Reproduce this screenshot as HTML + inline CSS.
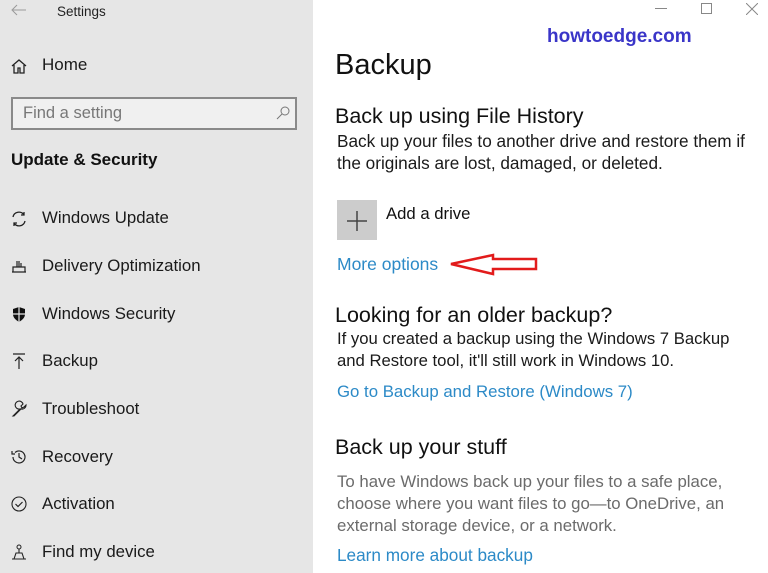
<!DOCTYPE html>
<html><head><meta charset="utf-8"><style>
*{margin:0;padding:0;box-sizing:border-box}
body{width:768px;height:573px;overflow:hidden;background:#fff;font-family:"Liberation Sans",sans-serif;position:relative;color:#000}
.side{position:absolute;left:0;top:0;width:313px;height:573px;background:#e6e6e6}
.a{position:absolute;white-space:nowrap}
.nav{font-size:16.8px;color:#1a1a1a}
.ic{position:absolute;left:10px;width:18px;height:18px}
.p{font-size:16.7px;color:#1a1a1a}
.g{color:#6b6b6b}
.l{color:#2c8ac7;font-size:16.5px}
</style></head><body>
<div class="side">
<svg class="a" style="left:11px;top:4px" width="16" height="12" viewBox="0 0 16 12"><path d="M15 6H2M6 1L1 6l5 5" stroke="#999" fill="none" stroke-width="1"/></svg>
<div class="a" style="left:57px;top:4px;font-size:13.5px;color:#222">Settings</div>
<svg class="ic" style="top:57px" viewBox="0 0 18 18"><path d="M2 9L9 3l7 6M4 8v8h4v-5h2v5h4V8" stroke="#222" fill="none" stroke-width="1.3"/></svg>
<div class="a nav" style="left:42px;top:55px;font-size:17px">Home</div>
<div class="a" style="left:11px;top:97px;width:286px;height:33px;border:2px solid #8a8a8a;background:#f0f0f0"></div>
<div class="a" style="left:23px;top:104px;font-size:16.5px;color:#777">Find a setting</div>
<svg class="a" style="left:275px;top:105px" width="16" height="16" viewBox="0 0 16 16"><circle cx="10" cy="6" r="4" stroke="#777" fill="none"/><path d="M7 9L2 14" stroke="#777"/></svg>
<div class="a" style="left:11px;top:150px;font-size:17px;font-weight:bold;color:#111">Update &amp; Security</div>
<svg class="ic" style="top:210px" viewBox="0 0 18 18"><path d="M3 7a6 6 0 0 1 11-2M15 11a6 6 0 0 1-11 2M14 2v3h-3M4 16v-3h3" stroke="#222" fill="none" stroke-width="1.3"/></svg>
<div class="a nav" style="left:42px;top:208px">Windows Update</div>
<svg class="ic" style="top:257px" viewBox="0 0 18 18"><path d="M2 15h14M3 15v-5h12v5M7 10V4M9 4v6M11 6v4" stroke="#222" fill="none" stroke-width="1.2"/></svg>
<div class="a nav" style="left:42px;top:256px">Delivery Optimization</div>
<svg class="ic" style="top:305px" viewBox="0 0 18 18"><path d="M9 2l6 2v5c0 4-3 6-6 8-3-2-6-4-6-8V4z" fill="#111"/><path d="M9 2v15M3 9h12" stroke="#e6e6e6" stroke-width="1.2"/></svg>
<div class="a nav" style="left:42px;top:304px">Windows Security</div>
<svg class="ic" style="top:352px" viewBox="0 0 18 18"><path d="M3 2h12M9 5v12M5 9l4-4 4 4" stroke="#222" fill="none" stroke-width="1.2"/></svg>
<div class="a nav" style="left:42px;top:351px">Backup</div>
<svg class="ic" style="top:400px" viewBox="0 0 18 18"><path d="M3 16l7-7a4 4 0 1 1 3-5l-2 2 1 2 2-1 2-2a4 4 0 0 1-5 4l-7 7z" stroke="#222" fill="none" stroke-width="1.1"/></svg>
<div class="a nav" style="left:42px;top:399px">Troubleshoot</div>
<svg class="ic" style="top:448px" viewBox="0 0 18 18"><path d="M3 9a6 6 0 1 0 2-4.5M2 3v3h3M9 5v4l3 2" stroke="#222" fill="none" stroke-width="1.2"/></svg>
<div class="a nav" style="left:42px;top:447px">Recovery</div>
<svg class="ic" style="top:495px" viewBox="0 0 18 18"><circle cx="9" cy="9" r="7" stroke="#222" fill="none" stroke-width="1.1"/><path d="M5.5 9l2.5 2.5 4.5-4.5" stroke="#222" fill="none" stroke-width="1.2"/></svg>
<div class="a nav" style="left:42px;top:494px">Activation</div>
<svg class="ic" style="top:543px" viewBox="0 0 18 18"><circle cx="9" cy="4" r="2" stroke="#222" fill="none"/><path d="M9 6v4M2 16h14M4 16l2-6h6l2 6" stroke="#222" fill="none" stroke-width="1.1"/></svg>
<div class="a nav" style="left:42px;top:542px">Find my device</div>
</div>
<div class="a" style="left:655px;top:8px;width:12px;height:1px;background:#888"></div>
<div class="a" style="left:701px;top:3px;width:11px;height:11px;border:1px solid #888"></div>
<svg class="a" style="left:746px;top:3px" width="12" height="12"><path d="M0 0L12 12M12 0L0 12" stroke="#888"/></svg>
<div class="a" style="left:547px;top:26px;font-size:19px;font-weight:bold;color:#3a35c8">howtoedge.com</div>
<div class="a" style="left:335px;top:49px;font-size:29px;color:#111">Backup</div>
<div class="a" style="left:335px;top:104px;font-size:21.5px;color:#111">Back up using File History</div>
<div class="a p" style="left:337px;top:131px;font-size:17.2px">Back up your files to another drive and restore them if</div>
<div class="a p" style="left:337px;top:153px;font-size:17.2px">the originals are lost, damaged, or deleted.</div>
<div class="a" style="left:337px;top:200px;width:40px;height:40px;background:#ccc"></div>
<svg class="a" style="left:346px;top:210px" width="22" height="22"><path d="M11 1v20M1 11h20" stroke="#444" stroke-width="1.5"/></svg>
<div class="a" style="left:386px;top:204px;font-size:16.7px;color:#111">Add a drive</div>
<div class="a l" style="left:337px;top:254px;font-size:17.5px">More options</div>
<svg class="a" style="left:445px;top:250px" width="100" height="30"><polygon points="6,14 48,5 48,9 91,9 91,19 48,19 48,24" fill="none" stroke="#e21b1b" stroke-width="2.5"/></svg>
<div class="a" style="left:335px;top:303px;font-size:21.5px;color:#111">Looking for an older backup?</div>
<div class="a p" style="left:337px;top:329px">If you created a backup using the Windows 7 Backup</div>
<div class="a p" style="left:337px;top:351px">and Restore tool, it'll still work in Windows 10.</div>
<div class="a l" style="left:337px;top:382px;font-size:16.8px">Go to Backup and Restore (Windows 7)</div>
<div class="a" style="left:335px;top:435px;font-size:21.5px;color:#111">Back up your stuff</div>
<div class="a p g" style="left:337px;top:472px;font-size:16.8px">To have Windows back up your files to a safe place,</div>
<div class="a p g" style="left:337px;top:494px;font-size:16.8px">choose where you want files to go—to OneDrive, an</div>
<div class="a p g" style="left:337px;top:516px;font-size:16.8px">external storage device, or a network.</div>
<div class="a l" style="left:337px;top:545px;font-size:17.2px">Learn more about backup</div>
</body></html>
